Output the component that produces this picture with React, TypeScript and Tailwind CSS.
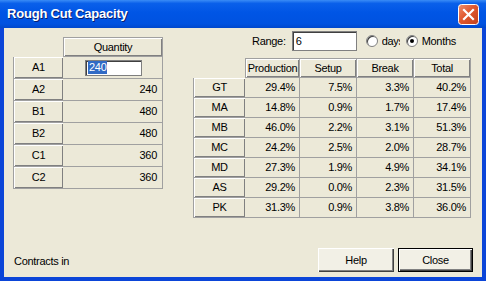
import React from 'react';

const quantities = [
  { id: 'A1', qty: '240', editing: true },
  { id: 'A2', qty: '240' },
  { id: 'B1', qty: '480' },
  { id: 'B2', qty: '480' },
  { id: 'C1', qty: '360' },
  { id: 'C2', qty: '360' },
];

const capacity = [
  ['GT', '29.4%', '7.5%', '3.3%', '40.2%'],
  ['MA', '14.8%', '0.9%', '1.7%', '17.4%'],
  ['MB', '46.0%', '2.2%', '3.1%', '51.3%'],
  ['MC', '24.2%', '2.5%', '2.0%', '28.7%'],
  ['MD', '27.3%', '1.9%', '4.9%', '34.1%'],
  ['AS', '29.2%', '0.0%', '2.3%', '31.5%'],
  ['PK', '31.3%', '0.9%', '3.8%', '36.0%'],
];

const columns = ['Production', 'Setup', 'Break', 'Total'];
const colWidths = ['w-[55px]', 'w-[57px]', 'w-[57px]', 'w-[57px]'];

// raised header cell, like the old win32 grid buttons
const raised =
  'bg-[#ECE9D8] shadow-[inset_1px_1px_#ffffff,inset_-1px_-1px_#808080] flex items-center justify-center border-[#A0A0A0]';

function CloseIcon() {
  return (
    <svg width="21" height="21" viewBox="0 0 21 21">
      <defs>
        <linearGradient id="xbtn" x1="0" y1="0" x2="1" y2="1">
          <stop offset="0" stopColor="#F0906E" />
          <stop offset="0.45" stopColor="#E0582F" />
          <stop offset="1" stopColor="#C0401C" />
        </linearGradient>
      </defs>
      <rect x="0.5" y="0.5" width="20" height="20" rx="3" fill="url(#xbtn)" stroke="#ffffff" />
      <path d="M6 6 L15 15 M15 6 L6 15" stroke="#ffffff" strokeWidth="2.2" strokeLinecap="square" />
    </svg>
  );
}

function Radio({ checked }: { checked?: boolean }) {
  return (
    <span className="w-[12px] h-[12px] rounded-full bg-white border border-[#808080] shadow-[inset_1px_1px_#404040] flex items-center justify-center shrink-0">
      {checked && <span className="w-[4px] h-[4px] rounded-full bg-black" />}
    </span>
  );
}

function QuantityGrid() {
  return (
    <div className="ml-[9px] mt-[9px] grid grid-cols-[50px_100px]">
      <div className="h-[20px]" />
      <div className={`${raised} h-[20px] border-t border-l border-r border-b`}>Quantity</div>
      {quantities.map((row) => (
        <React.Fragment key={row.id}>
          <div className={`${raised} h-[22px] border-l border-b`}>{row.id}</div>
          <div className="h-[22px] border-b border-r border-[#A0A0A0] flex items-center justify-end pr-[5px]">
            {row.editing ? (
              <div className="mr-auto ml-[22px] w-[57px] h-[16px] bg-white border border-[#7F7F7F] shadow-[inset_1px_1px_#404040] flex items-center pl-[2px]">
                <span className="bg-[#316AC5] text-white leading-[13px] px-px">{row.qty}</span>
              </div>
            ) : (
              row.qty
            )}
          </div>
        </React.Fragment>
      ))}
    </div>
  );
}

function CapacityTable() {
  return (
    <div className="mt-[7px] flex flex-col">
      <div className="flex">
        <div className="w-[52px] h-[20px]" />
        {columns.map((c, i) => (
          <div
            key={c}
            className={`${raised} ${colWidths[i]} h-[20px] border-t border-b border-r ${i === 0 ? 'border-l' : ''}`}
          >
            {c}
          </div>
        ))}
      </div>
      {capacity.map(([id, ...vals]) => (
        <div key={id} className="flex">
          <div className={`${raised} w-[52px] h-[20px] border-l border-b`}>{id}</div>
          {vals.map((v, i) => (
            <div
              key={i}
              className={`${colWidths[i]} h-[20px] border-b border-r border-[#A0A0A0] flex items-center justify-end pr-[4px]`}
            >
              {v}
            </div>
          ))}
        </div>
      ))}
    </div>
  );
}

export default function App() {
  return (
    <div className="w-[486px] h-[281px] flex flex-col bg-[#0B45D8] font-['Liberation_Sans',Arial,sans-serif] text-[11px] tracking-[-0.3px] text-black">
      <div className="h-[28px] shrink-0 flex items-center justify-between pl-[7px] pr-[7px] bg-[linear-gradient(to_bottom,#3A8CF6_0%,#0A60EA_12%,#0055E5_45%,#0052E0_85%,#0048CC_100%)]">
        <span className="text-white font-bold text-[13px] [text-shadow:1px_1px_#0A1E6E] tracking-[-0.2px]">
          Rough Cut Capacity
        </span>
        <CloseIcon />
      </div>

      <div className="flex-1 mx-[4px] mb-[4px] bg-[#ECE9D8] flex flex-col">
        <div className="flex items-start">
          <QuantityGrid />

          <div className="ml-[30px] flex flex-col">
            <div className="mt-[3px] h-[20px] flex items-center pl-[59px]">
              <span>Range:</span>
              <div className="ml-[6px] w-[65px] h-[20px] bg-white border border-[#808080] shadow-[inset_1px_1px_#404040] flex items-center pl-[3px]">
                6
              </div>
              <div className="ml-[9px] flex items-center gap-[4px]">
                <Radio />
                <span className="w-[18px] overflow-hidden whitespace-nowrap">days</span>
              </div>
              <div className="ml-[6px] flex items-center gap-[4px]">
                <Radio checked />
                <span className="w-[52px] overflow-hidden whitespace-nowrap">Months</span>
              </div>
            </div>
            <CapacityTable />
          </div>
        </div>

        <div className="mt-auto mb-[5px] flex items-end pl-[10px] pr-[9px]">
          <span className="mb-[3px]">Contracts in</span>
          <button className="ml-auto w-[76px] h-[24px] bg-[#F2F0E6] shadow-[inset_1px_1px_#ffffff,inset_-1px_-1px_#404040,inset_-2px_-2px_#808080]">
            Help
          </button>
          <button className="ml-[4px] w-[75px] h-[24px] bg-[#F2F0E6] border border-black shadow-[inset_1px_1px_#ffffff,inset_-1px_-1px_#404040,inset_-2px_-2px_#808080]">
            Close
          </button>
        </div>
      </div>
    </div>
  );
}
